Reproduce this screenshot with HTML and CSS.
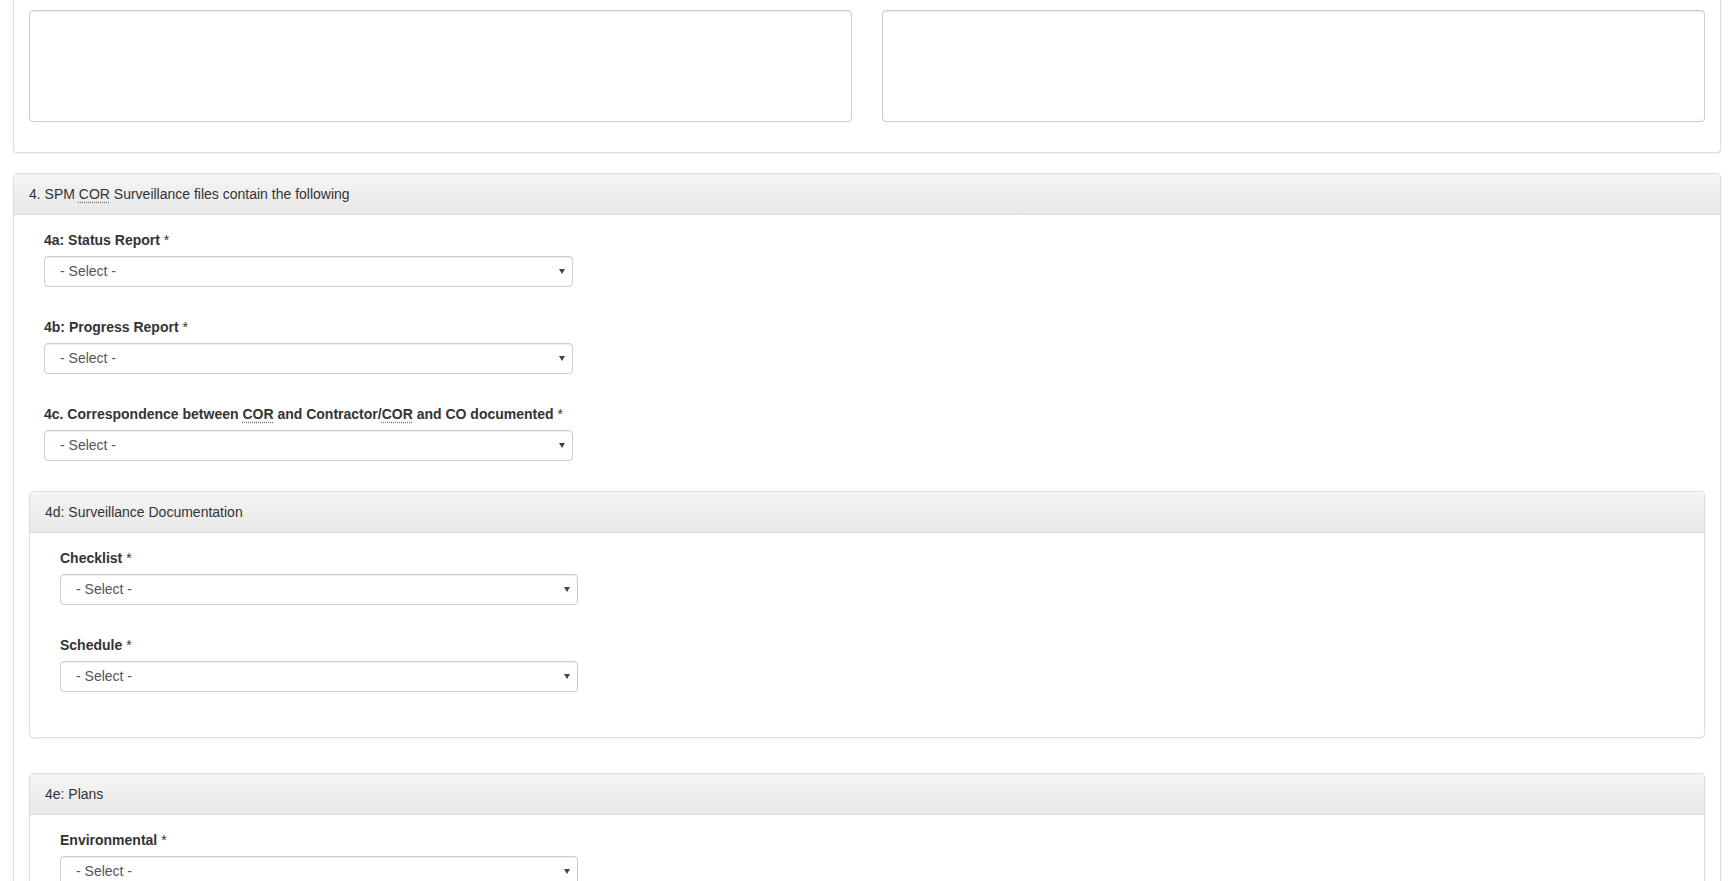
FILE: index.html
```html
<!DOCTYPE html>
<html lang="en">
<head>
    <meta charset="UTF-8">
    <meta name="viewport" content="width=device-width, initial-scale=1.0">
    <title>SPM COR Surveillance Review</title>
    <link rel="stylesheet" href="styles.css">
</head>
<body>
    <div class="page">

        <!-- comments section (continued from above) -->
        <div class="panel panel-cut">
            <div class="panel-body">
                <div class="row">
                    <div class="col-half">
                        <textarea class="form-control notes"></textarea>
                    </div>
                    <div class="col-half">
                        <textarea class="form-control notes"></textarea>
                    </div>
                </div>
            </div>
        </div>

        <div class="panel">
            <div class="panel-heading">4. SPM <abbr title="Contracting Officer's Representative">COR</abbr> Surveillance files contain the following</div>
            <div class="panel-body">
                <div class="col-third form-group">
                    <label for="q4a">4a: Status Report <span class="req">*</span></label>
                    <div class="select-wrap">
                        <select id="q4a" class="form-control"><option>- Select -</option><option>Yes</option><option>No</option><option>N/A</option></select>
                    </div>
                </div>
                <div class="col-third form-group">
                    <label for="q4b">4b: Progress Report <span class="req">*</span></label>
                    <div class="select-wrap">
                        <select id="q4b" class="form-control"><option>- Select -</option><option>Yes</option><option>No</option><option>N/A</option></select>
                    </div>
                </div>
                <div class="col-third form-group">
                    <label for="q4c">4c. Correspondence between <abbr title="Contracting Officer's Representative">COR</abbr> and Contractor/<abbr title="Contracting Officer's Representative">COR</abbr> and CO documented <span class="req">*</span></label>
                    <div class="select-wrap">
                        <select id="q4c" class="form-control"><option>- Select -</option><option>Yes</option><option>No</option><option>N/A</option></select>
                    </div>
                </div>

                <div class="panel panel-sub">
                    <div class="panel-heading">4d: Surveillance Documentation</div>
                    <div class="panel-body">
                        <div class="col-third form-group">
                            <label for="q4d1">Checklist <span class="req">*</span></label>
                            <div class="select-wrap">
                                <select id="q4d1" class="form-control"><option>- Select -</option><option>Yes</option><option>No</option><option>N/A</option></select>
                            </div>
                        </div>
                        <div class="col-third form-group">
                            <label for="q4d2">Schedule <span class="req">*</span></label>
                            <div class="select-wrap">
                                <select id="q4d2" class="form-control"><option>- Select -</option><option>Yes</option><option>No</option><option>N/A</option></select>
                            </div>
                        </div>
                    </div>
                </div>

                <div class="panel panel-sub">
                    <div class="panel-heading">4e: Plans</div>
                    <div class="panel-body">
                        <div class="col-third form-group">
                            <label for="q4e1">Environmental <span class="req">*</span></label>
                            <div class="select-wrap">
                                <select id="q4e1" class="form-control"><option>- Select -</option><option>Yes</option><option>No</option><option>N/A</option></select>
                            </div>
                        </div>
                        <div class="col-third form-group">
                            <label for="q4e2">Safety <span class="req">*</span></label>
                            <div class="select-wrap">
                                <select id="q4e2" class="form-control"><option>- Select -</option><option>Yes</option><option>No</option><option>N/A</option></select>
                            </div>
                        </div>
                    </div>
                </div>
            </div>
        </div>

    </div>
</body>
</html>
```

FILE: styles.css
```css
/* Global styles */
* {
    box-sizing: border-box;
}
body {
    margin: 0;
    font-family: "Liberation Sans", Arial, Helvetica, sans-serif;
    font-size: 14px;
    line-height: 20px;
    color: #333;
    background-color: #fff;
}
.page {
    padding: 0 11px 0 13px;
}
abbr[title] {
    text-decoration: underline dotted #777;
    text-underline-offset: 3px;
    cursor: help;
}

/* Panels */
.panel {
    background-color: #fff;
    border: 1px solid #ddd;
    border-radius: 4px;
    box-shadow: 0 1px 2px rgba(0, 0, 0, 0.06);
    margin-bottom: 20px;
}
.panel-heading {
    padding: 10px 15px;
    border-bottom: 1px solid #ddd;
    border-top-left-radius: 3px;
    border-top-right-radius: 3px;
    background-image: linear-gradient(to bottom, #f5f5f5 0%, #e8e8e8 100%);
    color: #333;
}
.panel-body {
    padding: 15px;
}
.panel-cut {
    border-top: 0;
    border-top-left-radius: 0;
    border-top-right-radius: 0;
}
.panel-cut .panel-body {
    padding-top: 10px;
}
.panel-sub {
    margin-bottom: 35px;
}

/* Grid */
.row {
    display: flex;
    margin: 0 -15px;
}
.col-half {
    width: 50%;
    padding: 0 15px;
}
.panel-cut .col-half {
    margin-bottom: 15px;
}
.col-third {
    width: 33.3333%;
    padding: 0 15px;
}
.form-group {
    margin-bottom: 30px;
}

/* Form controls */
label {
    display: inline-block;
    margin-bottom: 6px;
    font-weight: bold;
}
label .req {
    font-weight: normal;
}
.form-control {
    display: block;
    width: 100%;
    font-family: inherit;
    font-size: 14px;
    color: #555;
    background-color: #fff;
    border: 1px solid #ccc;
    border-radius: 4px;
    box-shadow: inset 0 1px 1px rgba(0, 0, 0, 0.075);
}
textarea.notes {
    height: 112px;
    resize: none;
    padding: 6px 12px;
}
.select-wrap {
    position: relative;
}
.select-wrap select {
    appearance: none;
    -webkit-appearance: none;
    height: 31px;
    padding: 0 24px 0 15px;
    line-height: 29px;
}
/* small arrow on the right of each dropdown */
.select-wrap::after {
    content: "";
    position: absolute;
    right: 8px;
    top: 13px;
    border-left: 3px solid transparent;
    border-right: 3px solid transparent;
    border-top: 5px solid #444;
    pointer-events: none;
}
```
